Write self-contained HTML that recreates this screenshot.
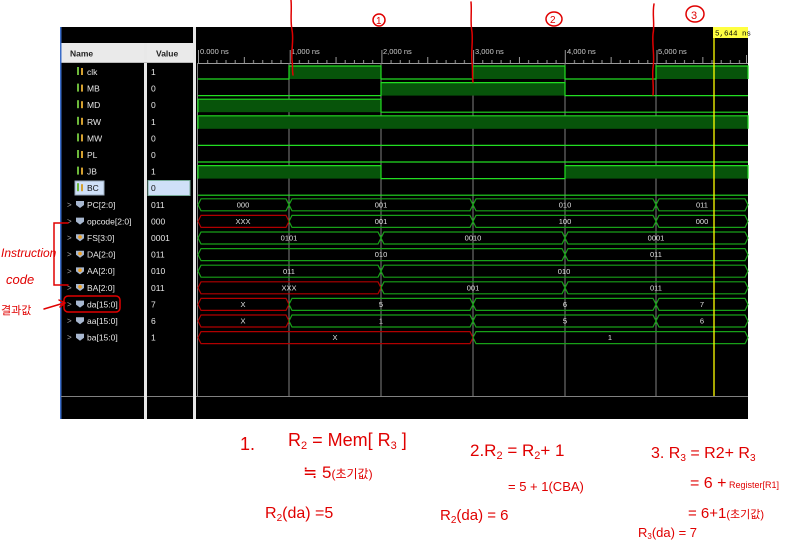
<!DOCTYPE html>
<html><head><meta charset="utf-8"><style>
html,body{margin:0;padding:0;background:#fff;width:793px;height:540px;overflow:hidden}
svg{display:block}
text{font-family:"Liberation Sans","Noto Sans CJK KR",sans-serif}
.n{fill:#e8e8e8;font-size:8.5px}
.v{fill:#e8e8e8;font-size:8.5px}
.bt{fill:#e0e0e0;font-size:7.5px;text-anchor:middle}
.g{fill:none;stroke:#18a018;stroke-width:1.2}
.r{fill:none;stroke:#b00000;stroke-width:1.2}
.d{fill:none;stroke:#22dd22;stroke-width:1.2}
.hf{fill:#07540a}
.ann{fill:#e00000;font-family:"Liberation Sans","Noto Sans CJK KR",sans-serif}
.al{fill:none;stroke:#e00000;stroke-width:1.5;stroke-linecap:round}
</style></head><body>
<svg width="793" height="540" viewBox="0 0 793 540" xmlns="http://www.w3.org/2000/svg">
<defs>
<pattern id="tk" x="198" y="0" width="91.7" height="70" patternUnits="userSpaceOnUse">
<g stroke="#9a9a9a" stroke-width="1">
<line x1="0.5" y1="50" x2="0.5" y2="63"/>
<line x1="9.67" y1="60" x2="9.67" y2="63"/>
<line x1="18.84" y1="60" x2="18.84" y2="63"/>
<line x1="28" y1="60" x2="28" y2="63"/>
<line x1="37.2" y1="60" x2="37.2" y2="63"/>
<line x1="46.35" y1="57" x2="46.35" y2="63"/>
<line x1="55.5" y1="60" x2="55.5" y2="63"/>
<line x1="64.7" y1="60" x2="64.7" y2="63"/>
<line x1="73.9" y1="60" x2="73.9" y2="63"/>
<line x1="83" y1="60" x2="83" y2="63"/>
</g>
</pattern>
</defs>
<rect x="60" y="27" width="688" height="392" fill="#000"/>
<rect x="60" y="27" width="1.5" height="392" fill="#3a6cc8"/>
<rect x="144" y="43" width="3" height="376" fill="#e8e8e8"/>
<rect x="193" y="27" width="3" height="392" fill="#e8e8e8"/>
<rect x="61.5" y="43" width="82.5" height="20" fill="#eaeaea"/>
<rect x="147" y="43" width="46" height="20" fill="#eaeaea"/>
<rect x="61.5" y="62" width="131.5" height="1" fill="#bbb"/>
<text x="70" y="56.5" style="font-size:8.5px;font-weight:bold;fill:#222">Name</text>
<text x="156" y="56.5" style="font-size:8.5px;font-weight:bold;fill:#222">Value</text>
<rect x="198" y="40" width="550" height="24" fill="url(#tk)"/>
<line x1="198" y1="63.5" x2="748" y2="63.5" stroke="#9a9a9a"/>
<line x1="746.5" y1="55" x2="746.5" y2="63" stroke="#9a9a9a"/>
<g style="font-size:7.5px;fill:#ccc;font-family:'Liberation Mono',monospace">
<text x="200" y="54">0.000 ns</text><text x="291" y="54">1,000 ns</text><text x="383" y="54">2,000 ns</text><text x="475" y="54">3,000 ns</text><text x="567" y="54">4,000 ns</text><text x="658" y="54">5,000 ns</text>
</g>
<g stroke="#808080" stroke-width="1">
<line x1="197.5" y1="63" x2="197.5" y2="396"/>
<line x1="289" y1="63" x2="289" y2="396"/>
<line x1="381" y1="63" x2="381" y2="396"/>
<line x1="473" y1="63" x2="473" y2="396"/>
<line x1="565" y1="63" x2="565" y2="396"/>
<line x1="656" y1="63" x2="656" y2="396"/>
<line x1="61" y1="396.5" x2="748" y2="396.5"/>
</g>
<rect x="144" y="395" width="3" height="3" fill="#e8e8e8"/><rect x="193" y="395" width="3" height="3" fill="#e8e8e8"/>
<rect class="hf" x="289" y="66" width="92" height="13"/><rect class="hf" x="473" y="66" width="92" height="13"/><rect class="hf" x="656" y="66" width="92" height="13"/>
<path class="d" d="M198,79H289V66H381V79H473V66H565V79H656V66H748V79"/>
<rect class="hf" x="381" y="82.6" width="184" height="13"/>
<path class="d" d="M198,95.6H381V82.6H565V95.6H748"/>
<rect class="hf" x="198" y="99.2" width="183" height="13"/>
<path class="d" d="M198,112.2V99.2H381V112.2H748"/>
<rect class="hf" x="198" y="115.8" width="550" height="13"/>
<path class="d" d="M198,128.8V115.8H748V128.8"/>
<path class="d" d="M198,145.4H748"/>
<path class="d" d="M198,162H748"/>
<rect class="hf" x="198" y="165.6" width="183" height="13"/><rect class="hf" x="565" y="165.6" width="183" height="13"/>
<path class="d" d="M198,178.6V165.6H381V178.6H565V165.6H748V178.6"/>
<path class="d" d="M198,195.2H748"/>
<path class="g" d="M198,204.8L201,198.8H286L289,204.8L286,210.8H201Z M289,204.8L292,198.8H470L473,204.8L470,210.8H292Z M473,204.8L476,198.8H653L656,204.8L653,210.8H476Z M656,204.8L659,198.8H745L748,204.8L745,210.8H659Z"/>
<text class="bt" x="243" y="207.5">000</text><text class="bt" x="381" y="207.5">001</text><text class="bt" x="565" y="207.5">010</text><text class="bt" x="702" y="207.5">011</text>
<path class="r" d="M198,221.4L201,215.4H286L289,221.4L286,227.4H201Z"/>
<path class="g" d="M289,221.4L292,215.4H470L473,221.4L470,227.4H292Z M473,221.4L476,215.4H653L656,221.4L653,227.4H476Z M656,221.4L659,215.4H745L748,221.4L745,227.4H659Z"/>
<text class="bt" x="243" y="224">XXX</text><text class="bt" x="381" y="224">001</text><text class="bt" x="565" y="224">100</text><text class="bt" x="702" y="224">000</text>
<path class="g" d="M198,238L201,232H378L381,238L378,244H201Z M381,238L384,232H562L565,238L562,244H384Z M565,238L568,232H745L748,238L745,244H568Z"/>
<text class="bt" x="289" y="240.6">0101</text><text class="bt" x="473" y="240.6">0010</text><text class="bt" x="656" y="240.6">0001</text>
<path class="g" d="M198,254.6L201,248.6H562L565,254.6L562,260.6H201Z M565,254.6L568,248.6H745L748,254.6L745,260.6H568Z"/>
<text class="bt" x="381" y="257.2">010</text><text class="bt" x="656" y="257.2">011</text>
<path class="g" d="M198,271.2L201,265.2H378L381,271.2L378,277.2H201Z M381,271.2L384,265.2H745L748,271.2L745,277.2H384Z"/>
<text class="bt" x="289" y="273.8">011</text><text class="bt" x="564" y="273.8">010</text>
<path class="r" d="M198,287.8L201,281.8H378L381,287.8L378,293.8H201Z"/>
<path class="g" d="M381,287.8L384,281.8H562L565,287.8L562,293.8H384Z M565,287.8L568,281.8H745L748,287.8L745,293.8H568Z"/>
<text class="bt" x="289" y="290.4">XXX</text><text class="bt" x="473" y="290.4">001</text><text class="bt" x="656" y="290.4">011</text>
<path class="r" d="M198,304.4L201,298.4H286L289,304.4L286,310.4H201Z"/>
<path class="g" d="M289,304.4L292,298.4H470L473,304.4L470,310.4H292Z M473,304.4L476,298.4H653L656,304.4L653,310.4H476Z M656,304.4L659,298.4H745L748,304.4L745,310.4H659Z"/>
<text class="bt" x="243" y="307">X</text><text class="bt" x="381" y="307">5</text><text class="bt" x="565" y="307">6</text><text class="bt" x="702" y="307">7</text>
<path class="r" d="M198,321L201,315H286L289,321L286,327H201Z"/>
<path class="g" d="M289,321L292,315H470L473,321L470,327H292Z M473,321L476,315H653L656,321L653,327H476Z M656,321L659,315H745L748,321L745,327H659Z"/>
<text class="bt" x="243" y="323.6">X</text><text class="bt" x="381" y="323.6">1</text><text class="bt" x="565" y="323.6">5</text><text class="bt" x="702" y="323.6">6</text>
<path class="r" d="M198,337.6L201,331.6H470L473,337.6L470,343.6H201Z"/>
<path class="g" d="M473,337.6L476,331.6H745L748,337.6L745,343.6H476Z"/>
<text class="bt" x="335" y="340.2">X</text><text class="bt" x="610" y="340.2">1</text>
<line x1="714" y1="38" x2="714" y2="396" stroke="#ffff00" stroke-width="1.3"/>
<rect x="713" y="27" width="35" height="11" fill="#ffff40"/>
<text x="715" y="35.5" style="font-size:7.5px;fill:#000;font-family:'Liberation Mono',monospace">5,644 ns</text>
<rect x="75" y="181" width="29" height="14" fill="#cfe0f8" stroke="#9ab"/>
<rect x="148" y="180.5" width="42" height="15" fill="#cfe0f8" stroke="#7a9"/>
<g fill="#6cb83a">
<rect x="77" y="67" width="2" height="8"/><rect x="81" y="68" width="2" height="7" fill="#d4a030"/>
<rect x="77" y="83.6" width="2" height="8"/><rect x="81" y="84.6" width="2" height="7" fill="#d4a030"/>
<rect x="77" y="100.2" width="2" height="8"/><rect x="81" y="101.2" width="2" height="7" fill="#d4a030"/>
<rect x="77" y="116.8" width="2" height="8"/><rect x="81" y="117.8" width="2" height="7" fill="#d4a030"/>
<rect x="77" y="133.4" width="2" height="8"/><rect x="81" y="134.4" width="2" height="7" fill="#d4a030"/>
<rect x="77" y="150" width="2" height="8"/><rect x="81" y="151" width="2" height="7" fill="#d4a030"/>
<rect x="77" y="166.6" width="2" height="8"/><rect x="81" y="167.6" width="2" height="7" fill="#d4a030"/>
<rect x="77" y="183.2" width="2" height="8"/><rect x="81" y="184.2" width="2" height="7" fill="#d4a030"/>
</g>
<text class="n" x="87" y="75">clk</text>
<text class="n" x="87" y="91.6">MB</text>
<text class="n" x="87" y="108.2">MD</text>
<text class="n" x="87" y="124.8">RW</text>
<text class="n" x="87" y="141.4">MW</text>
<text class="n" x="87" y="158">PL</text>
<text class="n" x="87" y="174.6">JB</text>
<text class="n" x="87" y="191.2" style="fill:#111">BC</text>
<g fill="#a8b8d0">
<path d="M76,201h8v4l-4,3l-4,-3z"/><path d="M76,217.6h8v4l-4,3l-4,-3z"/><path d="M76,234.2h8v4l-4,3l-4,-3z"/><path d="M76,250.8h8v4l-4,3l-4,-3z"/><path d="M76,267.4h8v4l-4,3l-4,-3z"/><path d="M76,284h8v4l-4,3l-4,-3z"/><path d="M76,300.6h8v4l-4,3l-4,-3z"/><path d="M76,317.2h8v4l-4,3l-4,-3z"/><path d="M76,333.8h8v4l-4,3l-4,-3z"/>
</g>
<g fill="#f0a020"><circle cx="80" cy="237" r="1.8"/><circle cx="80" cy="253.6" r="1.8"/><circle cx="80" cy="270.2" r="1.8"/><circle cx="80" cy="286.8" r="1.8"/></g>
<g class="n" style="font-size:8px;fill:#aaa">
<text x="67" y="207.5">&gt;</text><text x="67" y="224">&gt;</text><text x="67" y="240.6">&gt;</text><text x="67" y="257.2">&gt;</text><text x="67" y="273.8">&gt;</text><text x="67" y="290.4">&gt;</text><text x="67" y="307">&gt;</text><text x="67" y="323.6">&gt;</text><text x="67" y="340.2">&gt;</text>
</g>
<text class="n" x="87" y="207.8">PC[2:0]</text>
<text class="n" x="87" y="224.4">opcode[2:0]</text>
<text class="n" x="87" y="241">FS[3:0]</text>
<text class="n" x="87" y="257.6">DA[2:0]</text>
<text class="n" x="87" y="274.2">AA[2:0]</text>
<text class="n" x="87" y="290.8">BA[2:0]</text>
<text class="n" x="87" y="307.4">da[15:0]</text>
<text class="n" x="87" y="324">aa[15:0]</text>
<text class="n" x="87" y="340.6">ba[15:0]</text>
<text class="v" x="151" y="75">1</text><text class="v" x="151" y="91.6">0</text><text class="v" x="151" y="108.2">0</text><text class="v" x="151" y="124.8">1</text><text class="v" x="151" y="141.4">0</text><text class="v" x="151" y="158">0</text><text class="v" x="151" y="174.6">1</text><text class="v" x="151" y="191.2" style="fill:#111">0</text>
<text class="v" x="151" y="207.8">011</text><text class="v" x="151" y="224.4">000</text><text class="v" x="151" y="241">0001</text><text class="v" x="151" y="257.6">011</text><text class="v" x="151" y="274.2">010</text><text class="v" x="151" y="290.8">011</text><text class="v" x="151" y="307.4">7</text><text class="v" x="151" y="324">6</text><text class="v" x="151" y="340.6">1</text>
<path class="al" d="M291,0c1,10 -1,20 1,30c2,10 -1,20 0,30c1,6 0,10 1,15"/>
<path class="al" d="M471,2c1,10 -1,20 1,30c1,10 -1,20 0,30c1,8 0,14 1,20"/>
<path class="al" d="M654,4c-2,10 1,20 -1,30c-1,12 2,22 0,34c-1,10 1,18 0,27"/>
<circle cx="379" cy="20" r="6" class="al"/><text class="ann" x="376" y="24" font-size="10">1</text>
<ellipse cx="554" cy="19" rx="8" ry="7" class="al"/><text class="ann" x="550" y="23" font-size="10">2</text>
<ellipse cx="695" cy="14" rx="9" ry="8" class="al"/><text class="ann" x="691" y="19" font-size="11">3</text>
<path class="al" d="M68,223H54V285H68"/>
<text class="ann" x="1" y="257" font-size="12" style="font-style:italic">Instruction</text>
<text class="ann" x="6" y="284" font-size="13" style="font-style:italic">code</text>
<text class="ann" x="1" y="314" font-size="11">결과값</text>
<path class="al" d="M44,309L64,303M59,300L65,303L60,307"/>
<rect x="64" y="296" width="56" height="16" rx="4" class="al"/>
<g class="ann">
<text x="240" y="450" font-size="18">1.</text>
<text x="288" y="446" font-size="18">R<tspan font-size="11" dy="3">2</tspan><tspan dy="-3"> = Mem[ R</tspan><tspan font-size="11" dy="3">3</tspan><tspan dy="-3"> ]</tspan></text>
<text x="303" y="478" font-size="17">≒ 5<tspan font-size="12">(초기값)</tspan></text>
<text x="265" y="518" font-size="16">R<tspan font-size="10" dy="3">2</tspan><tspan dy="-3">(da) =5</tspan></text>
<text x="470" y="456" font-size="17">2.R<tspan font-size="11" dy="3">2</tspan><tspan dy="-3"> = R</tspan><tspan font-size="11" dy="3">2</tspan><tspan dy="-3">+ 1</tspan></text>
<text x="508" y="491" font-size="13">= 5 + 1(CBA)</text>
<text x="440" y="520" font-size="15">R<tspan font-size="10" dy="3">2</tspan><tspan dy="-3">(da) = 6</tspan></text>
<text x="651" y="458" font-size="16">3. R<tspan font-size="10" dy="3">3</tspan><tspan dy="-3"> = R2+ R</tspan><tspan font-size="10" dy="3">3</tspan></text>
<text x="690" y="488" font-size="16">= 6 +<tspan font-size="9"> Register[R1]</tspan></text>
<text x="688" y="518" font-size="15">= 6+1<tspan font-size="11">(초기값)</tspan></text>
<text x="638" y="537" font-size="13">R<tspan font-size="8" dy="2">3</tspan><tspan dy="-2">(da) = 7</tspan></text>
</g>
</svg>
</body></html>
